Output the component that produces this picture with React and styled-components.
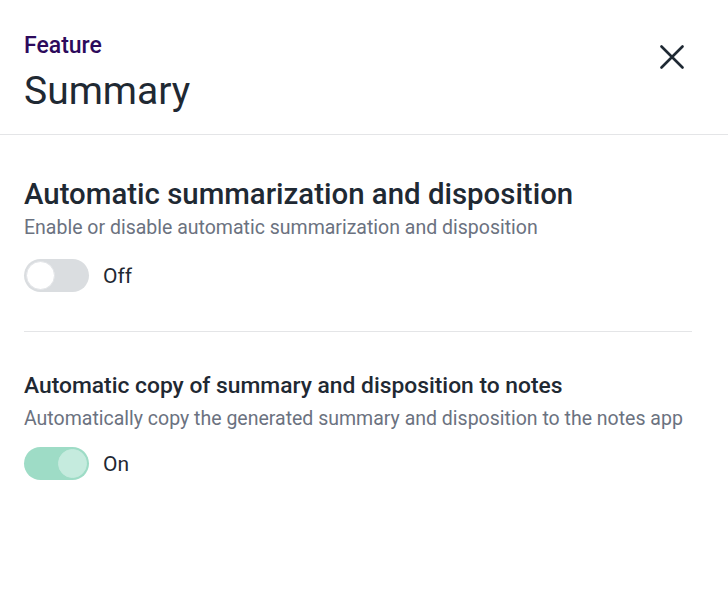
import React, { useState } from 'react';
import styled, { createGlobalStyle } from 'styled-components';

const GlobalStyle = createGlobalStyle`
  html, body {
    margin: 0;
    padding: 0;
    background: #ffffff;
  }
  body {
    font-family: Roboto, "Liberation Sans", Arial, sans-serif;
    color: #1f2933;
  }
`;

const Panel = styled.div`
  width: 728px;
  min-height: 599px;
  background: #ffffff;
`;

const Header = styled.header`
  display: flex;
  justify-content: space-between;
  align-items: flex-start;
  padding: 33px 44px 21px 24px;
  border-bottom: 1px solid #e4e5e7;
`;

const TitleBlock = styled.div`
  display: flex;
  flex-direction: column;
`;

const Eyebrow = styled.span`
  font-size: 23px;
  line-height: 26px;
  font-weight: 500;
  color: #2c0a5c;
`;

const PageTitle = styled.h1`
  margin: 10px 0 0;
  font-size: 39px;
  line-height: 44px;
  font-weight: 400;
  color: #1f2933;
`;

const CloseButton = styled.button`
  border: none;
  background: none;
  padding: 0;
  margin-top: 12px;
  width: 24px;
  height: 24px;
  cursor: pointer;
  color: #1f2933;
  display: flex;
`;

const Body = styled.div`
  padding: 0 36px 0 24px;
`;

const Section = styled.section`
  padding: ${p => p.$top}px 0 ${p => p.$bottom}px;
  border-bottom: ${p => (p.$divider ? '1px solid #e4e5e7' : 'none')};
`;

const SectionTitle = styled.h2`
  margin: 0;
  font-size: ${p => p.$size}px;
  line-height: ${p => p.$lh}px;
  font-weight: 500;
  color: #1f2933;
`;

const SectionText = styled.p`
  margin: ${p => p.$gap}px 0 0;
  font-size: 19.5px;
  line-height: 24px;
  color: #6b7280;
`;

const ToggleRow = styled.label`
  display: flex;
  align-items: center;
  gap: 14px;
  margin-top: ${p => p.$gap}px;
  cursor: pointer;
`;

const Track = styled.span`
  position: relative;
  display: inline-block;
  width: 65px;
  height: 33px;
  border-radius: 17px;
  background: ${p => (p.$on ? '#9edcc6' : '#dadde0')};
  transition: background 0.2s;
`;

const Knob = styled.span`
  position: absolute;
  top: 2px;
  left: ${p => (p.$on ? '34px' : '2px')};
  width: 29px;
  height: 29px;
  border-radius: 50%;
  box-sizing: border-box;
  background: ${p => (p.$on ? '#c5ebde' : '#ffffff')};
  border: 1px solid ${p => (p.$on ? '#c5ebde' : '#e2e4e7')};
  transition: left 0.2s;
`;

const ToggleLabel = styled.span`
  font-size: 21px;
  line-height: 24px;
  color: #1f2933;
`;

const Toggle = ({ on, onChange, gap }) => (
  <ToggleRow $gap={gap} onClick={onChange}>
    <Track $on={on}>
      <Knob $on={on} />
    </Track>
    <ToggleLabel>{on ? 'On' : 'Off'}</ToggleLabel>
  </ToggleRow>
);

const App = () => {
  const [autoSummary, setAutoSummary] = useState(false);
  const [copyToNotes, setCopyToNotes] = useState(true);

  return (
    <Panel>
      <GlobalStyle />
      <Header>
        <TitleBlock>
          <Eyebrow>Feature</Eyebrow>
          <PageTitle>Summary</PageTitle>
        </TitleBlock>
        <CloseButton aria-label="Close">
          <svg width="24" height="24" viewBox="0 0 24 24" fill="none">
            <path d="M1.5 1.5 L22.5 22.5 M22.5 1.5 L1.5 22.5" stroke="currentColor" strokeWidth="2.6" strokeLinecap="round" />
          </svg>
        </CloseButton>
      </Header>

      <Body>
        <Section $top={42} $bottom={39} $divider>
          <SectionTitle $size={29.4} $lh={34}>Automatic summarization and disposition</SectionTitle>
          <SectionText $gap={5}>Enable or disable automatic summarization and disposition</SectionText>
          <Toggle on={autoSummary} onChange={() => setAutoSummary(v => !v)} gap={19} />
        </Section>

        <Section $top={40} $bottom={0}>
          <SectionTitle $size={22.8} $lh={28}>Automatic copy of summary and disposition to notes</SectionTitle>
          <SectionText $gap={7}>Automatically copy the generated summary and disposition to the notes app</SectionText>
          <Toggle on={copyToNotes} onChange={() => setCopyToNotes(v => !v)} gap={16} />
        </Section>
      </Body>
    </Panel>
  );
};

export default App;
